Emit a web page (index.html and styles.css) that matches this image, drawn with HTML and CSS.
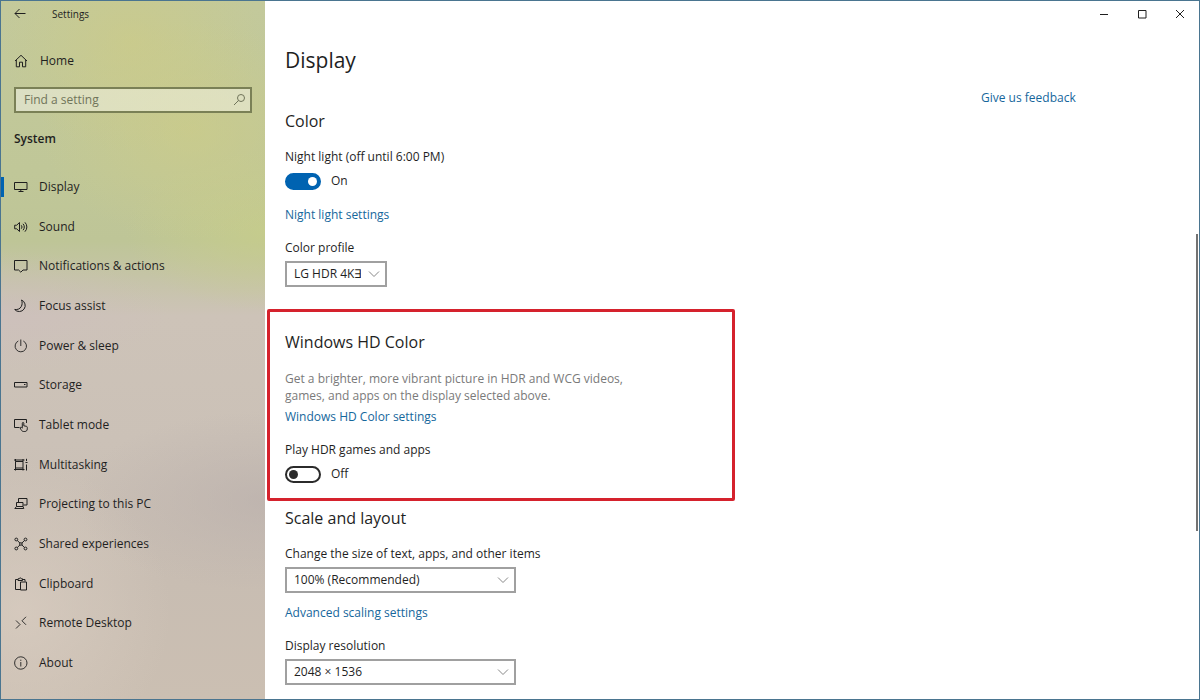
FILE: index.html
```
<!DOCTYPE html>
<html lang="en">

<head>
    <meta charset="UTF-8">
    <meta name="viewport" content="width=device-width, initial-scale=1.0">
    <title>Settings</title>
    <link rel="stylesheet" href="styles.css">
</head>

<body>
    <div class="window">
        <aside class="sidebar">
            <div class="sidebar__top">
                <button class="back" aria-label="Back">
                    <svg class="icon" viewBox="0 0 14 14"><path d="M2 6.500h10.500M6.500 2L2 6.500 6.500 11"/></svg>
                </button>
                <span class="sidebar__app">Settings</span>
            </div>

            <a class="home" href="#">
                <svg class="icon" viewBox="0 0 14 14"><path d="M1 7L7 1.300 13 7M2.300 6v6.800h3.200V8.200h3v4.600h3.200V6"/></svg>
                Home
            </a>

            <div class="search">
                <input class="search__input" type="text" placeholder="Find a setting" aria-label="Find a setting">
                <svg class="search__icon" viewBox="0 0 14 14"><circle cx="9" cy="5" r="3.500"/><path d="M6.500 7.500L2 12"/></svg>
            </div>

            <h2 class="sidebar__title">System</h2>

            <nav class="menu">
                <a class="menu__item menu__item--active" href="#">
                    <svg class="icon" viewBox="0 0 14 14"><path d="M.5 2.500h12.500v7H.5zM6.800 9.500v2M4.500 11.500h5"/></svg>
                    Display
                </a>
                <a class="menu__item" href="#">
                    <svg class="icon" viewBox="0 0 14 14"><path d="M.7 5.200h2L5.500 2.500v9L2.700 8.800h-2zM7.300 5.300a2.500 2.500 0 0 1 0 3.400M9 3.800a4.600 4.600 0 0 1 0 6.400M10.900 2.300a6.600 6.600 0 0 1 0 9.400"/></svg>
                    Sound
                </a>
                <a class="menu__item" href="#">
                    <svg class="icon" viewBox="0 0 14 14"><path d="M.5 1.500h12.500v9.500H9L6.800 13.200 4.600 11H.5z"/></svg>
                    Notifications &amp; actions
                </a>
                <a class="menu__item" href="#">
                    <svg class="icon" viewBox="0 0 14 14"><path d="M7.500 1a6 6 0 1 1-6.800 9.500c2.800.4 5.300-.6 6.500-2.800C8.400 5.500 8.400 3 7.500 1z"/></svg>
                    Focus assist
                </a>
                <a class="menu__item" href="#">
                    <svg class="icon icon--thin" viewBox="0 0 14 14"><path d="M6.800 .5v6.500M4.300 2a5.700 5.700 0 1 0 5 0"/></svg>
                    Power &amp; sleep
                </a>
                <a class="menu__item" href="#">
                    <svg class="icon" viewBox="0 0 14 14"><path d="M.5 4.500h12.500v4.500H.5zM10 6.500h1.500"/></svg>
                    Storage
                </a>
                <a class="menu__item" href="#">
                    <svg class="icon" viewBox="0 0 14 14"><path d="M5.500 9.500H.5v-8h12V5M8.300 9.800V5.200c0-1 1.500-1 1.500 0v2.600l2.600.5c.7.200.9.600.9 1.200v1.300c0 1.700-1 2.700-2.500 2.700H9.700c-1.200 0-2-.7-2.600-1.700L6 9.800c.8-.8 1.500-.6 2.300.3z"/></svg>
                    Tablet mode
                </a>
                <a class="menu__item" href="#">
                    <svg class="icon" viewBox="0 0 14 14"><path d="M1.500 3.500h7.500v6.500H1.500zM0 2h10.500M0 11.500h10.500M1.500 1v2.500M9 1v2.500M1.500 10v2.500M9 10v2.500M12.500 .8v2.200M12.500 6.500v6M11.500 4.500h2"/></svg>
                    Multitasking
                </a>
                <a class="menu__item" href="#">
                    <svg class="icon" viewBox="0 0 14 14"><path d="M4.500 5V1.500h8.500v6.500H9.500M2.500 9.500V5.500h6.500v4zM2.500 9.500L.8 11.500h9L9 9.500"/></svg>
                    Projecting to this PC
                </a>
                <a class="menu__item" href="#">
                    <svg class="icon" viewBox="0 0 14 14"><circle cx="2.300" cy="2.500" r="1.400"/><circle cx="11.500" cy="2.500" r="1.400"/><circle cx="2.300" cy="11.500" r="1.400"/><circle cx="11.500" cy="11.500" r="1.400"/><circle cx="6.900" cy="7" r="1.300"/><path d="M3.300 3.500L6 6.100M10.500 3.500L7.800 6.100M3.300 10.500L6 7.900M10.500 10.500L7.800 7.900"/></svg>
                    Shared experiences
                </a>
                <a class="menu__item" href="#">
                    <svg class="icon" viewBox="0 0 14 14"><path d="M6 12.500H1.500v-10H4M8.500 2.500H11v2M4 3.500V1.800h1.200C5.400.5 7.100.5 7.300 1.800h1.200v1.700zM6.500 5h6v8h-6z"/></svg>
                    Clipboard
                </a>
                <a class="menu__item" href="#">
                    <svg class="icon icon--thin" viewBox="0 0 14 14"><path d="M2 4.500l4 4-4 4M12 .8L8 4.800l4 4"/></svg>
                    Remote Desktop
                </a>
                <a class="menu__item" href="#">
                    <svg class="icon icon--thin" viewBox="0 0 14 14"><circle cx="6.800" cy="7" r="6.200"/><path d="M6.800 6v4.500M6.800 3.700v1.200"/></svg>
                    About
                </a>
            </nav>
        </aside>

        <main class="main">
            <header class="titlebar">
                <button class="titlebar__button" aria-label="Minimize">
                    <svg viewBox="0 0 10 10"><path d="M1 5.500h8"/></svg>
                </button>
                <button class="titlebar__button" aria-label="Maximize">
                    <svg viewBox="0 0 10 10"><path d="M1.500 1.500h7.500v7.500H1.500z"/></svg>
                </button>
                <button class="titlebar__button" aria-label="Close">
                    <svg viewBox="0 0 10 10"><path d="M1 1l8 8M9 1L1 9"/></svg>
                </button>
            </header>

            <div class="page">
                <div class="page__content">
                    <h1 class="page__title">Display</h1>

                    <section class="section">
                        <h2 class="section__title">Color</h2>
                        <label class="label" for="night-light">Night light (off until 6:00 PM)</label>
                        <div class="switch">
                            <input class="switch__input" id="night-light" type="checkbox" role="switch" checked>
                            <span>On</span>
                        </div>
                        <a class="link" href="#">Night light settings</a>
                        <label class="label" for="profile">Color profile</label>
                        <div class="dropdown dropdown--small">
                            <select class="dropdown__select" id="profile">
                                <option>LG HDR 4K∃</option>
                            </select>
                            <svg class="dropdown__arrow" viewBox="0 0 12 12"><path d="M1 3.500l5 5 5-5"/></svg>
                        </div>
                    </section>

                    <section class="section section--highlight">
                        <h2 class="section__title">Windows HD Color</h2>
                        <p class="description">Get a brighter, more vibrant picture in HDR and WCG videos, games, and apps on the display selected above.</p>
                        <a class="link link--close" href="#">Windows HD Color settings</a>
                        <label class="label" for="hdr">Play HDR games and apps</label>
                        <div class="switch">
                            <input class="switch__input" id="hdr" type="checkbox" role="switch">
                            <span>Off</span>
                        </div>
                    </section>

                    <section class="section">
                        <h2 class="section__title">Scale and layout</h2>
                        <label class="label" for="scale">Change the size of text, apps, and other items</label>
                        <div class="dropdown">
                            <select class="dropdown__select" id="scale">
                                <option>100% (Recommended)</option>
                            </select>
                            <svg class="dropdown__arrow" viewBox="0 0 12 12"><path d="M1 3.500l5 5 5-5"/></svg>
                        </div>
                        <a class="link link--close" href="#">Advanced scaling settings</a>
                        <label class="label" for="resolution">Display resolution</label>
                        <div class="dropdown">
                            <select class="dropdown__select" id="resolution">
                                <option>2048 × 1536</option>
                            </select>
                            <svg class="dropdown__arrow" viewBox="0 0 12 12"><path d="M1 3.500l5 5 5-5"/></svg>
                        </div>
                    </section>
                </div>

                <div class="page__side">
                    <a class="feedback" href="#">Give us feedback</a>
                </div>
            </div>
        </main>

        <div class="scrollbar"></div>
    </div>
</body>

</html>
```
FILE: styles.css
```
* {
    box-sizing: border-box;
}

body {
    margin: 0;
    background-color: #fff;
    color: #1f1f1f;
    font-family: "Open Sans", "Noto Sans", sans-serif;
    font-size: 12px;
    line-height: 20px;
}

h1, h2, p {
    margin: 0;
    font-weight: 400;
}

a {
    color: inherit;
    text-decoration: none;
}

button {
    display: flex;
    align-items: center;
    justify-content: center;
    padding: 0;
    border: 0;
    background: none;
    color: inherit;
}

svg {
    fill: none;
    stroke: currentColor;
}

.window {
    position: relative;
    display: flex;
    height: 100vh;
    overflow: hidden;
    border: 1px solid #4a7590;
}

/* Sidebar */

.sidebar {
    display: flex;
    flex-direction: column;
    flex: 0 0 264px;
    padding-bottom: 16px;
    background:
        radial-gradient(ellipse 130px 110px at 130px 40px, rgba(204, 203, 136, 0.7), transparent),
        radial-gradient(ellipse 150px 110px at 190px 130px, rgba(204, 204, 136, 0.7), transparent),
        radial-gradient(ellipse 140px 80px at 264px 230px, rgba(200, 206, 136, 0.7), transparent),
        radial-gradient(ellipse 170px 60px at 0 310px, rgba(205, 190, 190, 0.6), transparent),
        radial-gradient(ellipse 190px 90px at 264px 500px, rgba(184, 174, 171, 0.6), transparent),
        radial-gradient(ellipse 150px 150px at 20px 610px, rgba(218, 206, 194, 0.7), transparent),
        linear-gradient(#c3c99b 0, #c0c798 170px, #bec597 240px, #cdc3b8 315px, #cbc1b7 440px, #c8bdb2 580px, #cbbfb2 100%);
}

.icon {
    flex: none;
    width: 14px;
    height: 14px;
}

.icon--thin {
    stroke-width: 0.9px;
}

.sidebar__top {
    display: flex;
    align-items: center;
    gap: 25px;
    height: 26px;
    padding-left: 12px;
}

.back {
    width: 14px;
    height: 20px;
}

.sidebar__app {
    font-size: 10px;
}

.home {
    display: flex;
    align-items: center;
    gap: 12px;
    height: 40px;
    margin: 14px 0 6px 13px;
}

.search {
    display: flex;
    align-items: center;
    height: 26px;
    margin: 0 13px;
    padding-right: 4px;
    border: 2px solid #7a8056;
    background-color: rgba(255, 255, 255, 0.42);
}

.search__input {
    flex: 1;
    min-width: 0;
    padding: 0 8px;
    border: 0;
    outline: 0;
    background: none;
    color: inherit;
    font: inherit;
}

.search__input::placeholder {
    color: #70745a;
    opacity: 1;
}

.search__icon {
    width: 14px;
    height: 14px;
    color: #70745a;
}

.sidebar__title {
    margin: 16px 0 18px 13px;
    font-size: 12px;
    font-weight: 600;
}

/* rows share whatever height is left */
.menu {
    display: grid;
    flex: 1;
    grid-auto-rows: 1fr;
}

.menu__item {
    position: relative;
    display: flex;
    align-items: center;
    gap: 11px;
    padding-left: 13px;
}

.menu__item--active::before {
    content: "";
    position: absolute;
    left: 0;
    width: 3px;
    height: 20px;
    background-color: #0063b1;
}

/* Main area */

.main {
    display: flex;
    flex: 1;
    flex-direction: column;
    min-width: 0;
}

.titlebar {
    display: flex;
    justify-content: flex-end;
    height: 26px;
}

.titlebar__button {
    width: 38px;
}

.titlebar__button svg {
    width: 10px;
    height: 10px;
}

.page {
    display: flex;
    padding: 18px 0 0 20px;
}

.page__content {
    flex: 1;
}

.page__side {
    flex: 0 0 218px;
    padding-top: 43px;
}

.page__title {
    font-size: 21px;
    line-height: 30px;
}

.section {
    padding-top: 35px;
}

.section__title {
    margin-bottom: 15px;
    font-size: 16px;
    line-height: 22px;
}

.section--highlight {
    width: 468px;
    margin: 22px 0 6px -18px;
    padding: 19px 15px 14px;
    border: 3px solid #d5222d;
    border-radius: 2px;
}

.section--highlight + .section {
    padding-top: 0;
}

.label {
    display: block;
}

.link {
    display: table;
    margin: 14px 0 13px;
}

.link--close {
    margin-top: 3px;
}

.link,
.feedback {
    color: #16679c;
}

.description {
    max-width: 350px;
    padding-top: 2px;
    color: #7a7a7a;
    line-height: 17px;
}

.switch {
    display: flex;
    align-items: center;
    gap: 10px;
    margin-top: 4px;
}

.switch__input {
    appearance: none;
    display: flex;
    align-items: center;
    width: 36px;
    height: 17px;
    margin: 0;
    padding: 0 2px;
    border: 2px solid #2b2b2b;
    border-radius: 9px;
}

.switch__input::before {
    content: "";
    width: 9px;
    height: 9px;
    border-radius: 50%;
    background-color: #2b2b2b;
}

.switch__input:checked {
    justify-content: flex-end;
    border-color: #0063b1;
    background-color: #0063b1;
}

.switch__input:checked::before {
    background-color: #fff;
}

.dropdown {
    position: relative;
    width: 231px;
    margin: 3px 0 10px;
}

.dropdown--small {
    width: 102px;
    margin-bottom: 0;
}

.dropdown__select {
    appearance: none;
    display: block;
    width: 100%;
    height: 26px;
    padding: 0 24px 0 7px;
    border: 2px solid #a0a0a0;
    border-radius: 0;
    background-color: #fff;
    color: inherit;
    font: inherit;
}

.dropdown__arrow {
    position: absolute;
    top: 7px;
    right: 7px;
    width: 12px;
    height: 12px;
    color: #888;
    pointer-events: none;
}

/* thin scroll indicator over the right edge */
.scrollbar {
    position: absolute;
    right: 1px;
    bottom: 24%;
    width: 2px;
    height: 297px;
    background-color: #737373;
}
```
